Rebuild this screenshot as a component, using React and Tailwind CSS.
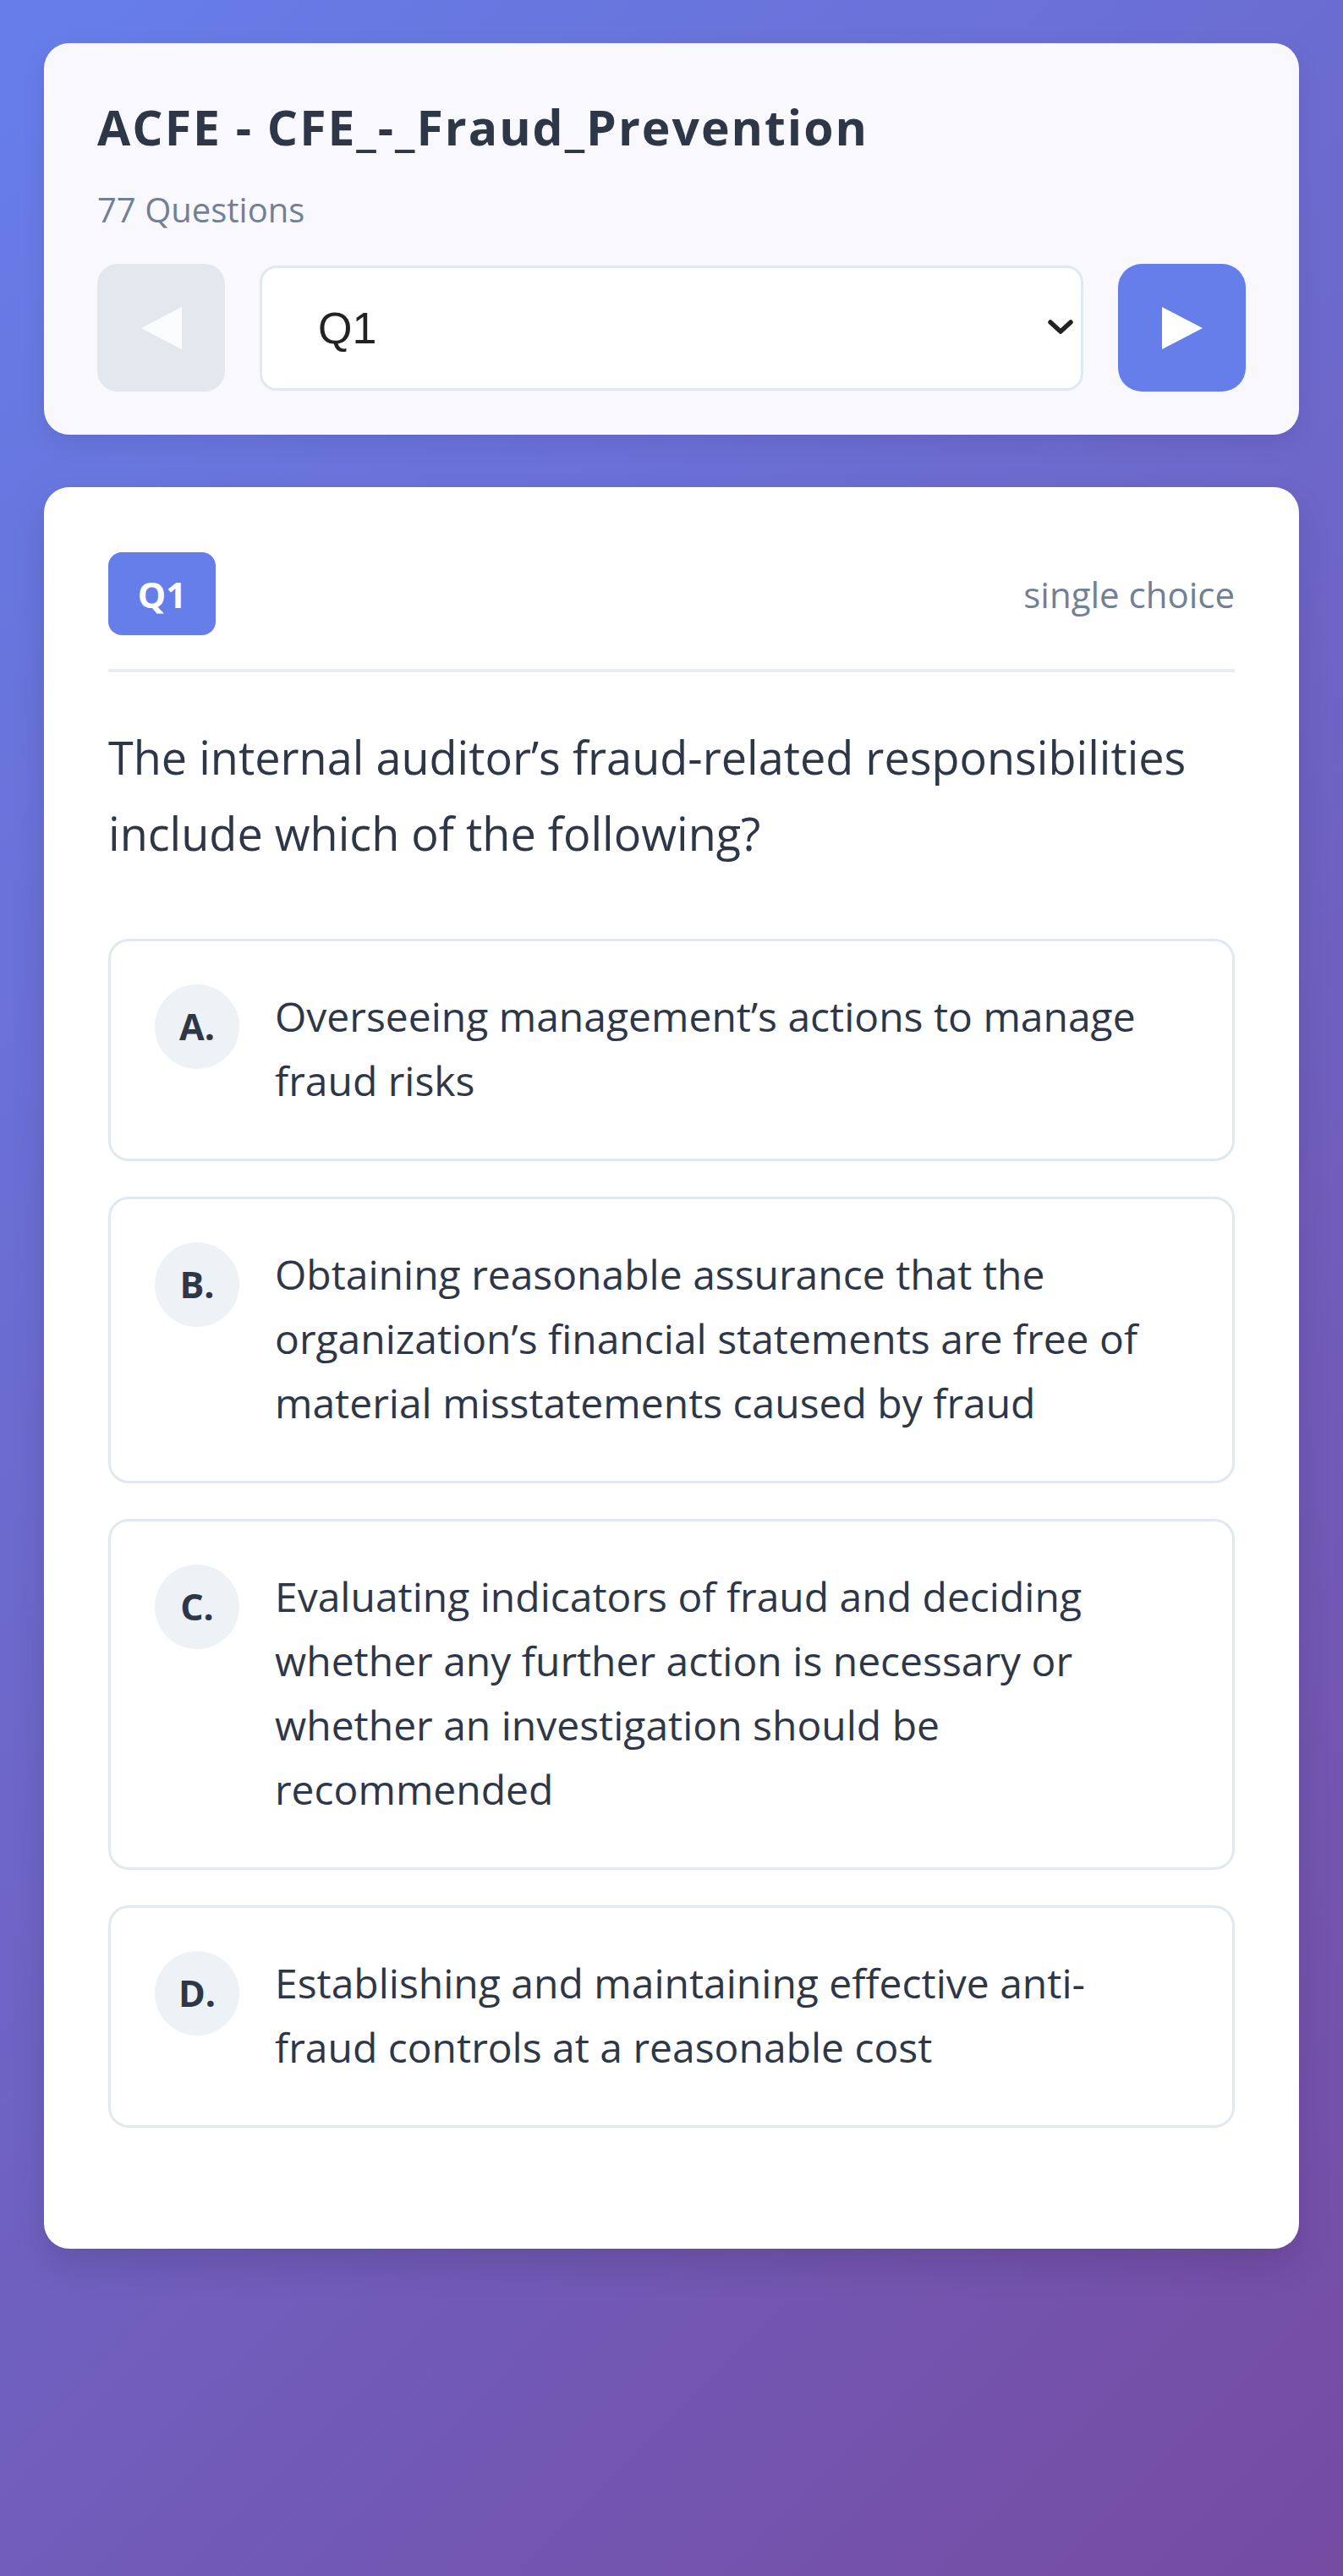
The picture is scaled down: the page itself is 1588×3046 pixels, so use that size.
import React from "react";

const options = [
  { letter: "A.", lines: ["Overseeing management’s actions to manage", "fraud risks"] },
  {
    letter: "B.",
    lines: [
      "Obtaining reasonable assurance that the",
      "organization’s financial statements are free of",
      "material misstatements caused by fraud",
    ],
  },
  {
    letter: "C.",
    lines: [
      "Evaluating indicators of fraud and deciding",
      "whether any further action is necessary or",
      "whether an investigation should be",
      "recommended",
    ],
  },
  {
    letter: "D.",
    lines: ["Establishing and maintaining effective anti-", "fraud controls at a reasonable cost"],
  },
];

function Option({ letter, lines }) {
  return (
    <div className="flex items-start rounded-[24px] border-[3px] border-[#e2e8f0] bg-white pt-[51px] pb-[54px] pl-[52px] pr-[30px]">
      <div className="flex h-[100px] w-[100px] shrink-0 items-center justify-center rounded-full bg-[#edf2f7] text-[43px] font-bold text-[#2d3748]">
        {letter}
      </div>
      <div className="ml-[42px] text-[48px] leading-[76px] text-[#2d3748]">
        {lines.map((l, i) => (
          <div key={i} className="whitespace-nowrap">
            {l}
          </div>
        ))}
      </div>
    </div>
  );
}

export default function App() {
  return (
    <div className="min-h-screen bg-[linear-gradient(135deg,#667eea_0%,#764ba2_100%)] px-[52px] pt-[51px] pb-[50px] font-['Open_Sans','Noto_Sans',sans-serif]">
      <div className="rounded-[30px] bg-[#f9f9fd] px-[63px] pt-[65px] pb-[51px] shadow-[0_10px_30px_rgba(0,0,0,0.08)]">
        <h1 className="text-[57px] font-bold leading-[1.2] tracking-[2px] text-[#2d3748]">ACFE - CFE_-_Fraud_Prevention</h1>
        <p className="mt-[34px] text-[40px] leading-[1.5] text-[#718096]">77 Questions</p>
        <div className="mt-[34px] flex items-center gap-[41px]">
          <button className="flex h-[151px] w-[151px] shrink-0 items-center justify-center rounded-[24px] bg-[#e3e8ef]">
            <svg width="52" height="54" viewBox="0 0 52 54">
              <polygon points="50,2 50,52 2,27" fill="#ffffff" fillOpacity="0.85" />
            </svg>
          </button>
          <div className="relative h-[148px] flex-1">
            <select className="h-full w-full appearance-none rounded-[20px] border-[3px] border-[#e2e8f0] bg-white pl-[66px] font-['Liberation_Sans',Arial,sans-serif] text-[52px] text-[#222222] outline-none">
              <option>Q1</option>
            </select>
            <svg
              className="pointer-events-none absolute right-[12px] top-[64px]"
              width="30"
              height="18"
              viewBox="0 0 30 18"
            >
              <polyline points="3,3 15,14 27,3" fill="none" stroke="#222222" strokeWidth="5.5" strokeLinecap="round" strokeLinejoin="round" />
            </svg>
          </div>
          <button className="flex h-[151px] w-[151px] shrink-0 items-center justify-center rounded-[28px] bg-[#667eea]">
            <svg width="52" height="54" viewBox="0 0 52 54">
              <polygon points="2,2 2,52 50,27" fill="#ffffff" />
            </svg>
          </button>
        </div>
      </div>

      <div className="mt-[62px] rounded-[30px] bg-white px-[76px] pt-[77px] pb-[143px] shadow-[0_20px_40px_rgba(0,0,0,0.12)]">
        <div className="flex items-center justify-between border-b-4 border-[#e8ecf1] pb-[40px]">
          <span className="flex h-[98px] w-[127px] items-center justify-center rounded-[16px] bg-[#667eea] text-[42px] font-bold text-white">
            Q1
          </span>
          <span className="text-[42px] text-[#718096]">single choice</span>
        </div>
        <div className="mt-[55px] text-[54px] leading-[90px] text-[#2d3748]">
          <div className="whitespace-nowrap">The internal auditor’s fraud-related responsibilities</div>
          <div className="whitespace-nowrap">include which of the following?</div>
        </div>
        <div className="mt-[80px] flex flex-col gap-[42px]">
          {options.map((o) => (
            <Option key={o.letter} {...o} />
          ))}
        </div>
      </div>
    </div>
  );
}
